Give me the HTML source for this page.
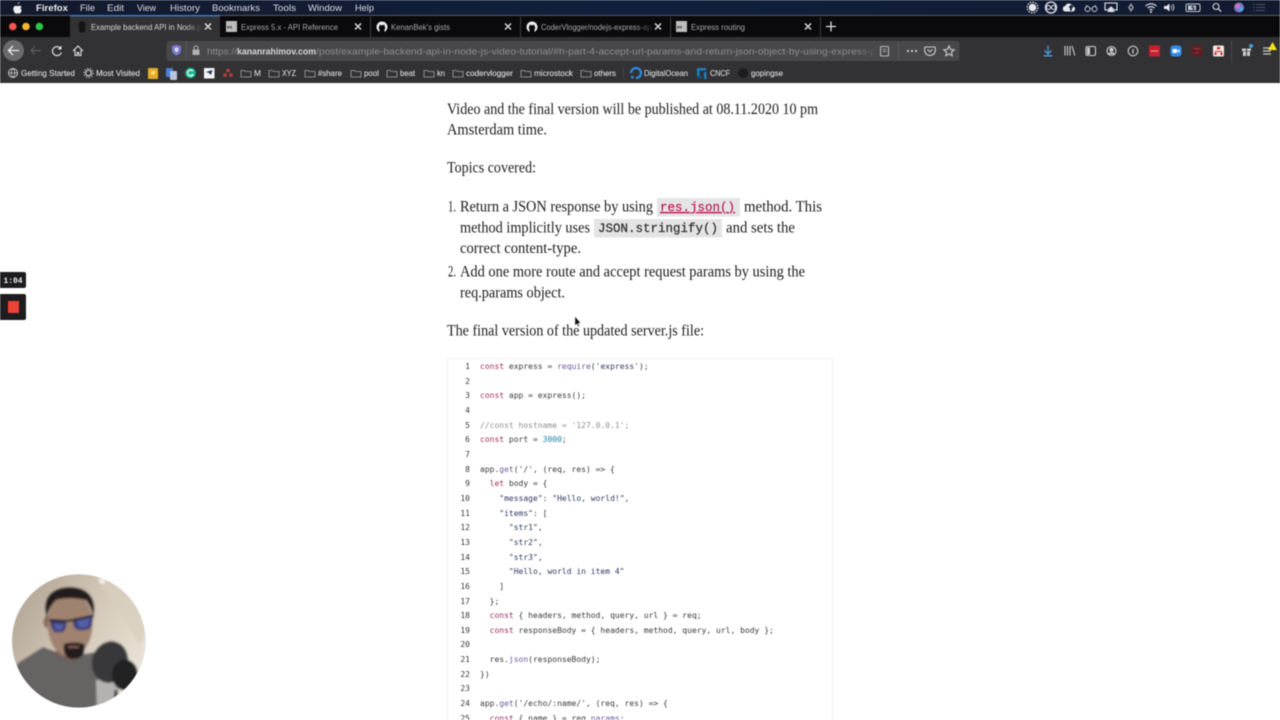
<!DOCTYPE html>
<html><head><meta charset="utf-8"><title>Example backend API in Node.js</title>
<style>
html,body{margin:0;padding:0;width:1280px;height:720px;overflow:hidden;background:#fff}
svg{position:absolute;left:0;top:0}
.s{font-family:"Liberation Sans",sans-serif}
.g{font-family:"Liberation Serif",serif;font-size:15.5px;fill:#1c1c1c}
.m{font-family:"Liberation Mono",monospace;font-size:12.5px;stroke-width:.2px}
#all{filter:blur(.4px)}
#code{position:absolute;left:447px;top:358px;width:386px;height:362px;overflow:hidden;box-sizing:border-box;border:1px solid #f1f1f1;border-bottom:0;border-radius:2px;background:#fff}
#code pre{margin:0;position:absolute;top:1px;font:8px/14.65px "DejaVu Sans Mono",monospace;color:#3a3a3a}
#n{left:0;width:22px;text-align:right}
#c{left:32px}
.k{color:#a0305f}.f{color:#6f5a9e}.t{color:#2f3c60}.u{color:#1f7fa8}.o{color:#8f9194}
</style></head><body>
<div id="all">
<svg width="1280" height="720" viewBox="0 0 1280 720" xmlns="http://www.w3.org/2000/svg">
<defs><linearGradient id="bar" x1="0" x2="1" y1="0" y2="0"><stop offset="0" stop-color="#141a2e"/><stop offset=".5" stop-color="#10203c"/><stop offset="1" stop-color="#121a30"/></linearGradient>
<linearGradient id="wall" x1="0" x2="1" y1="0" y2=".6"><stop offset="0" stop-color="#a69a8a"/><stop offset=".55" stop-color="#d2c6b6"/><stop offset="1" stop-color="#ebe5da"/></linearGradient>
<clipPath id="cc"><circle cx="78.700" cy="641" r="66.500"/></clipPath>
<filter id="soft" x="-10%" y="-10%" width="120%" height="120%"><feGaussianBlur stdDeviation="1.100"/></filter>
<linearGradient id="fade"><stop offset="0" stop-color="#323234" stop-opacity="0"/><stop offset="1" stop-color="#323234"/></linearGradient>
<linearGradient id="fade2"><stop offset="0" stop-color="#0a0a0c" stop-opacity="0"/><stop offset="1" stop-color="#0a0a0c"/></linearGradient>
<linearGradient id="fade3"><stop offset="0" stop-color="#48484a" stop-opacity="0"/><stop offset="1" stop-color="#48484a"/></linearGradient></defs>

<!-- menu bar -->
<rect width="1280" height="15" fill="url(#bar)"/>
<path d="M17.800 4c.9-.1 1.600-.9 1.600-1.900-1 .1-1.800 1-1.600 1.900zM21.800 10.300c-1-.5-1.400-1.800-.9-2.800.2-.3.4-.6.7-.8-.5-.7-1.300-1-2.100-1-.8 0-1.300.4-1.800.4s-1.100-.4-1.800-.4c-1.600.1-2.600 1.500-2.600 3.200 0 2 1.500 4.700 2.800 4.700.6 0 .9-.4 1.600-.4s1 .4 1.600.4c1.100 0 2-1.700 2.500-3.300z" fill="#eee"/>
<g class="s" font-size="9.500" fill="#dcdde2">
<text x="36" y="11" font-weight="700" textLength="32" lengthAdjust="spacingAndGlyphs" fill="#eee">Firefox</text>
<text x="80" y="11" textLength="15" lengthAdjust="spacingAndGlyphs">File</text>
<text x="107" y="11" textLength="17" lengthAdjust="spacingAndGlyphs">Edit</text>
<text x="137" y="11" textLength="19" lengthAdjust="spacingAndGlyphs">View</text>
<text x="170" y="11" textLength="30" lengthAdjust="spacingAndGlyphs">History</text>
<text x="212" y="11" textLength="48" lengthAdjust="spacingAndGlyphs">Bookmarks</text>
<text x="273" y="11" textLength="23" lengthAdjust="spacingAndGlyphs">Tools</text>
<text x="308" y="11" textLength="34" lengthAdjust="spacingAndGlyphs">Window</text>
<text x="355" y="11" textLength="19" lengthAdjust="spacingAndGlyphs">Help</text>
</g>
<!-- status icons -->
<g fill="#e8e8ec" stroke="none">
<circle cx="1032.500" cy="7.500" r="3.800"/><circle cx="1032.500" cy="7.500" r="5.400" fill="none" stroke="#e8e8ec" stroke-width="1.200" stroke-dasharray="1.600 1.200"/>
<circle cx="1051" cy="7.500" r="5.500" fill="none" stroke="#e8e8ec" stroke-width="1.300"/><circle cx="1048.500" cy="7.500" r="2" fill="none" stroke="#e8e8ec"/><circle cx="1053.500" cy="7.500" r="2" fill="none" stroke="#e8e8ec"/>
<path d="M1065 11.500a2.800 2.800 0 0 1 .3-5.500 3.800 3.800 0 0 1 7.200.2 2.700 2.700 0 0 1 .5 5.300z"/>
<path d="M1071 4.600l-2.600 3h1.600v3h2v-3h1.600z" fill="#10203c"/>
<circle cx="1087.500" cy="9" r="2.500" fill="none" stroke="#c9cad0" stroke-width=".9"/><circle cx="1094.500" cy="9" r="2.500" fill="none" stroke="#c9cad0" stroke-width=".9"/><path d="M1090 8.500h2M1085.500 8l1.500-3M1096.500 8l-1.500-3" stroke="#c9cad0" stroke-width=".8" fill="none"/>
<path d="M1105 3h12v7h-2.500l-3.500-3-3.500 3H1105z" fill="none" stroke="#e8e8ec" stroke-width="1.100"/><path d="M1111 7.500l4 4.500h-8z"/>
<path d="M1131 3l3 4.500-3 4.500-3-4.500z" fill="#9a9ca4"/><circle cx="1131" cy="7.500" r="1.200" fill="#10203c"/>
<path d="M1145.500 6a8 8 0 0 1 11 0M1147.500 8a5.200 5.200 0 0 1 7 0M1149.500 10a2.400 2.400 0 0 1 3 0" fill="none" stroke="#e8e8ec" stroke-width="1.200"/><circle cx="1151" cy="12" r="1"/>
<path d="M1164 6h2.500l3-2.500v8l-3-2.500H1164z"/><path d="M1171 5.500a3 3 0 0 1 0 4M1172.500 4a5 5 0 0 1 0 7" fill="none" stroke="#e8e8ec" stroke-width=".8"/>
<rect x="1186" y="4" width="14" height="7.500" rx="1.500" fill="none" stroke="#c9cad0"/><path d="M1188 5.500h8v4.500h-8z" fill="#c9cad0"/><path d="M1193.500 4.500l-2.500 3.500h2l-.5 3 2.500-3.500h-2z" fill="#10203c"/>
<circle cx="1216" cy="6.500" r="3" fill="none" stroke="#dcdde2" stroke-width="1.100"/><path d="M1218.200 8.700l3 3" stroke="#dcdde2" stroke-width="1.200"/>
<circle cx="1239" cy="7.500" r="5" fill="#7f73c8"/><circle cx="1237.500" cy="6" r="2.200" fill="#e26fae"/><circle cx="1241" cy="9" r="2.200" fill="#4fa8e0"/>
<path d="M1253 4.500h1.500M1256 4.500h9M1253 7.500h1.500M1256 7.500h9M1253 10.500h1.500M1256 10.500h9" stroke="#50566a" stroke-width=".9"/>
</g>

<!-- tab strip -->
<rect y="15" width="1280" height="22" fill="#0a0a0c"/>
<rect y="15" width="1280" height=".8" fill="#6d6d74"/>
<rect x="70" y="15" width="150" height="22" fill="#323234"/>
<rect x="70" y="15" width="150" height="1.300" fill="#3f7fd6"/>
<circle cx="12.800" cy="26.500" r="3.800" fill="#f1554e"/><circle cx="26" cy="26.500" r="3.800" fill="#f2b632"/><circle cx="39.400" cy="26.500" r="3.800" fill="#2fc44a"/>
<g stroke="#4a4a4e" stroke-width=".8"><path d="M370.500 17v20M520.500 17v20M670.500 17v20M820.500 17v20"/></g>
<g class="s" font-size="8">
<text x="91" y="30" fill="#d8d8da" textLength="112" lengthAdjust="spacingAndGlyphs">Example backend API in Node.js</text>
<rect x="185" y="20" width="18" height="14" fill="url(#fade)"/>
<text x="241" y="30" fill="#a8a8aa" textLength="97" lengthAdjust="spacingAndGlyphs">Express 5.x - API Reference</text>
<text x="391" y="30" fill="#a8a8aa" textLength="59" lengthAdjust="spacingAndGlyphs">KenanBek's gists</text>
<text x="541" y="30" fill="#a8a8aa" textLength="112" lengthAdjust="spacingAndGlyphs">CoderVlogger/nodejs-express-api</text>
<rect x="636" y="20" width="18" height="14" fill="url(#fade2)"/>
<text x="691" y="30" fill="#a8a8aa" textLength="54" lengthAdjust="spacingAndGlyphs">Express routing</text>
</g>
<g stroke="#eee" stroke-width="1.300"><path d="M205 23.500l6 6M211 23.500l-6 6M355 23.500l6 6M361 23.500l-6 6M505 23.500l6 6M511 23.500l-6 6M655 23.500l6 6M661 23.500l-6 6M805 23.500l6 6M811 23.500l-6 6"/></g>
<path d="M831 21.500v10M826 26.500h10" stroke="#ddd" stroke-width="1.300"/>
<!-- favicons -->
<circle cx="82" cy="25" r="3.800" fill="#151515"/><path d="M78.500 28h7l-1 4.500h-5z" fill="#151515"/>
<g class="s" font-size="4.500" font-weight="700">
<rect x="226" y="21" width="11" height="11" fill="#bdbdbd"/><text x="227" y="28.500" fill="#222">ex</text>
<rect x="676" y="21" width="11" height="11" fill="#bdbdbd"/><text x="677" y="28.500" fill="#222">ex</text>
</g>
<g fill="#eee"><circle cx="382" cy="27" r="5.500"/><circle cx="532" cy="27" r="5.500"/></g>
<g fill="#0a0a0c"><path d="M379.500 32.500v-3c-.8-.8-1-2.500 0-3.500l.3-1.500 1.400.8h1.600l1.400-.8.3 1.500c1 1 .8 2.700 0 3.500v3z"/><path d="M529.500 32.500v-3c-.8-.8-1-2.500 0-3.500l.3-1.500 1.400.8h1.600l1.400-.8.3 1.500c1 1 .8 2.700 0 3.500v3z"/></g>

<!-- nav toolbar -->
<rect y="37" width="1280" height="46" fill="#323234"/>
<circle cx="13.500" cy="50.500" r="10.500" fill="#6a6a6c"/>
<path d="M19 50.500H8.500M13 46l-4.500 4.500L13 55" fill="none" stroke="#eee" stroke-width="1.300"/>
<path d="M41 50.500h-10M35 46.500l-4 4 4 4" fill="none" stroke="#5e5e60" stroke-width="1.200"/>
<path d="M61 49a4.500 4.500 0 1 0 .3 3.500" fill="none" stroke="#e2e2e2" stroke-width="1.200"/><path d="M61.500 45.500v4h-4z" fill="#e2e2e2"/>
<path d="M73 51l5-5 5 5M75 50v5.500h2.200v-3h1.600v3H81V50" fill="none" stroke="#e2e2e2" stroke-width="1.100"/>
<!-- url bar -->
<rect x="166.500" y="41" width="793" height="20" rx="3" fill="#48484a"/>
<path d="M172.500 46.500l4-1.300 4 1.300v3.500c0 2.500-1.700 4-4 5-2.300-1-4-2.500-4-5z" fill="#6f6fd0" stroke="#8f8fe6" stroke-width=".7"/><path d="M174.500 47.800l2-.6 2 .6v2c0 1.300-.8 2.200-2 2.800-1.200-.6-2-1.500-2-2.800z" fill="#d5d5ea"/>
<path d="M186.500 41.500v19" stroke="#5a5a5c" stroke-width=".8"/>
<rect x="192.500" y="49.500" width="7" height="5.500" rx=".8" fill="#b0b0b2"/><path d="M194 49.500v-1.500a2 2 0 0 1 4 0v1.500" fill="none" stroke="#b0b0b2"/>
<text class="s" x="207" y="54.500" font-size="9" fill="#8e8e90" textLength="30" lengthAdjust="spacingAndGlyphs">https://</text>
<text class="s" x="237" y="54.500" font-size="9" font-weight="700" fill="#d6d6d8" textLength="79" lengthAdjust="spacingAndGlyphs">kananrahimov.com</text>
<text class="s" x="316" y="54.500" font-size="9" fill="#8e8e90" textLength="562" lengthAdjust="spacingAndGlyphs">/post/example-backend-api-in-node-js-video-tutorial/#h-part-4-accept-url-params-and-return-json-object-by-using-express-js</text>
<rect x="858" y="42" width="20" height="18" fill="url(#fade3)"/>
<rect x="878" y="42" width="20" height="18" fill="#48484a"/>
<rect x="880.500" y="46.500" width="8" height="9.500" rx="1" fill="none" stroke="#bbb" stroke-width="1.100"/><path d="M882.500 49.500h4M882.500 51.500h4" stroke="#bbb" stroke-width=".8"/>
<path d="M898.500 43v16" stroke="#5e5e60" stroke-width=".8"/>
<g fill="#d0d0d2"><circle cx="908" cy="51" r="1.100"/><circle cx="912" cy="51" r="1.100"/><circle cx="916" cy="51" r="1.100"/></g>
<path d="M925.500 47h9a.8.800 0 0 1 .8.800v2.700a5.300 5 0 0 1-10.600 0v-2.700a.8.800 0 0 1 .8-.8z" fill="none" stroke="#ccc" stroke-width="1.100"/><path d="M927.500 49.500l2.500 2.300 2.500-2.300" fill="none" stroke="#ccc" stroke-width="1.100"/>
<path d="M949 46l1.500 3.400 3.700.4-2.800 2.400.8 3.600-3.200-1.900-3.200 1.900.8-3.600-2.800-2.400 3.700-.4z" fill="none" stroke="#ccc" stroke-width="1.100"/>
<!-- toolbar right -->
<path d="M1048 45.500v8M1044.500 50.500l3.500 3.500 3.500-3.500M1043.500 55.800h9" fill="none" stroke="#4a9be0" stroke-width="1.300"/>
<g stroke="#ccc" fill="none" stroke-width="1.100">
<path d="M1065 46v9.500M1067.500 46v9.500M1070 46v9.500M1072 46l2.800 9.500"/>
<rect x="1086" y="46.500" width="9.500" height="9" rx="1.500"/><rect x="1087" y="47.500" width="3" height="7" fill="#ccc" stroke="none"/>
<circle cx="1111.500" cy="51" r="4.500"/><circle cx="1111.500" cy="49.800" r="1.600" fill="#ccc"/><path d="M1108.500 54.200a3.300 2.500 0 0 1 6 0" fill="#ccc"/>
<circle cx="1133" cy="51" r="4.800"/><path d="M1133 49v4.500" stroke-width="1.300"/>
</g>
<rect x="1149" y="45.500" width="11" height="11" rx="1" fill="#c8202e"/><path d="M1151 51h7" stroke="#f2dfe0" stroke-dasharray="1.300 .8" stroke-width="1.300"/>
<rect x="1170.500" y="45.500" width="11" height="11" rx="3" fill="#2d8cf0"/><rect x="1172.500" y="49" width="4.500" height="4" rx=".8" fill="#fff"/><path d="M1177.500 50.500l2-1.300v3.600l-2-1.300z" fill="#fff"/>
<rect x="1191.500" y="45.500" width="11" height="11" rx="1" fill="#5e1f22"/><rect x="1193.500" y="48" width="7" height="1.500" fill="#8c3236"/><rect x="1195.500" y="52" width="3" height="1.500" fill="#8c3236"/>
<rect x="1213" y="45.500" width="11" height="11" rx="1.500" fill="#f1e6e2"/><path d="M1218.500 47.500v2M1215.500 54v-2.500h6V54" fill="none" stroke="#c83c3c"/><rect x="1217" y="47" width="3" height="2.500" fill="#c83c3c"/><rect x="1214.200" y="53" width="2.500" height="2" fill="#c83c3c"/><rect x="1220.200" y="53" width="2.500" height="2" fill="#c83c3c"/>
<path d="M1231.500 40v22" stroke="#4e4e50" stroke-width=".8"/>
<rect x="1242" y="48.500" width="9" height="2.500" fill="#ccc"/><rect x="1243" y="51.500" width="7" height="4.500" fill="#ccc"/><path d="M1246.500 48.500v7.500" stroke="#323234"/><circle cx="1251" cy="46" r="2" fill="#45a1e0"/>
<path d="M1263 48h8M1263 51h8M1263 54h8" stroke="#ccc" stroke-width="1.200"/>
<path d="M1272.500 42l4.500 8h-9z" fill="#f5e21c"/>

<!-- bookmarks -->
<g font-size="7.800" class="s" fill="#d8d8da" stroke="#d8d8da" stroke-width=".12">
<text x="21" y="76" textLength="54" lengthAdjust="spacingAndGlyphs">Getting Started</text>
<text x="96" y="76" textLength="44" lengthAdjust="spacingAndGlyphs">Most Visited</text>
<text x="254" y="76" textLength="7" lengthAdjust="spacingAndGlyphs">M</text>
<text x="282" y="76" textLength="14" lengthAdjust="spacingAndGlyphs">XYZ</text>
<text x="318" y="76" textLength="24" lengthAdjust="spacingAndGlyphs">#share</text>
<text x="364" y="76" textLength="15" lengthAdjust="spacingAndGlyphs">pool</text>
<text x="400" y="76" textLength="15" lengthAdjust="spacingAndGlyphs">beat</text>
<text x="437" y="76" textLength="8" lengthAdjust="spacingAndGlyphs">kn</text>
<text x="466" y="76" textLength="47" lengthAdjust="spacingAndGlyphs">codervlogger</text>
<text x="534" y="76" textLength="39" lengthAdjust="spacingAndGlyphs">microstock</text>
<text x="594" y="76" textLength="22" lengthAdjust="spacingAndGlyphs">others</text>
<text x="644" y="76" textLength="44" lengthAdjust="spacingAndGlyphs">DigitalOcean</text>
<text x="710" y="76" textLength="20" lengthAdjust="spacingAndGlyphs">CNCF</text>
<text x="751" y="76" textLength="32" lengthAdjust="spacingAndGlyphs">gopingse</text>
</g>
<circle cx="13" cy="73" r="4.500" fill="none" stroke="#ccc" stroke-width="1"/><path d="M8.500 73h9M13 68.500c-2.500 3-2.500 6 0 9M13 68.500c2.500 3 2.500 6 0 9" fill="none" stroke="#ccc" stroke-width=".7"/>
<circle cx="88.500" cy="73" r="2.800" fill="none" stroke="#ccc" stroke-width="1.200"/><circle cx="88.500" cy="73" r="4.500" fill="none" stroke="#ccc" stroke-width="1.200" stroke-dasharray="1.300 1.500"/>
<rect x="148" y="68" width="10" height="11" rx="1" fill="#e8ac24"/><path d="M151 71h4v3.500h-4z" fill="#f6dd80"/>
<rect x="166" y="68" width="7" height="9" rx="1" fill="#4a80d8"/><rect x="170" y="71" width="7" height="9" rx="1" fill="#b7c6de"/>
<circle cx="190.500" cy="73" r="5.300" fill="#17b890"/><path d="M193 71.200a3 3 0 1 0 0 3.600h-2" fill="none" stroke="#fff" stroke-width="1.200"/>
<rect x="204" y="68" width="10.500" height="10.500" fill="#f4f4f6"/><path d="M206 72l6.500-2-1.500 5-2-2z" fill="#24355c"/>
<g fill="#b83c3c"><circle cx="228" cy="70.500" r="1.900"/><circle cx="225" cy="75" r="1.900"/><circle cx="231" cy="75" r="1.900"/></g>
<g fill="none" stroke="#a4a4a6" stroke-width=".8">
<path d="M241 70.500v6.500h10v-5.500h-5.500l-1-1z"/>
<path d="M269 70.500v6.500h10v-5.500h-5.500l-1-1z"/><path d="M305 70.500v6.500h10v-5.500h-5.500l-1-1z"/><path d="M351 70.500v6.500h10v-5.500h-5.500l-1-1z"/><path d="M387 70.500v6.500h10v-5.500h-5.500l-1-1z"/><path d="M424 70.500v6.500h10v-5.500h-5.500l-1-1z"/><path d="M453 70.500v6.500h10v-5.500h-5.500l-1-1z"/><path d="M521 70.500v6.500h10v-5.500h-5.500l-1-1z"/><path d="M581 70.500v6.500h10v-5.500h-5.500l-1-1z"/>
</g>
<path d="M623.500 67v12" stroke="#4a4a4c" stroke-width=".8"/>
<path d="M636 78a5 5 0 1 0-5-5" fill="none" stroke="#2f8be0" stroke-width="2.200"/><rect x="631" y="76" width="2.500" height="2.500" fill="#2f8be0"/>
<path d="M697 68h9v2.500h-6.500V76H697z" fill="#1c7fc4"/><path d="M697 76h5v2.500h-5z" fill="#124e7a"/><rect x="704" y="72" width="2.500" height="7" fill="#1c7fc4"/>
<circle cx="743" cy="73" r="5" fill="#1c1c1e"/>

<!-- recording widget -->
<rect x="-3" y="272" width="29" height="16" rx="2" fill="#1d1d1f"/>
<text x="3.500" y="283" font-family="Liberation Mono,monospace" font-size="8" font-weight="700" fill="#f2f2f2" textLength="19" lengthAdjust="spacingAndGlyphs">1:04</text>
<rect x="-3" y="294" width="29" height="26" rx="2" fill="#1d1d1f"/>
<rect x="8" y="301" width="11" height="12" fill="#ef4236"/>

<!-- article text -->
<g class="g" transform="translate(0 .5)">
<text x="447" y="113.500" textLength="371" lengthAdjust="spacingAndGlyphs">Video and the final version will be published at 08.11.2020 10 pm</text>
<text x="447" y="134" textLength="100" lengthAdjust="spacingAndGlyphs">Amsterdam time.</text>
<text x="447" y="172" textLength="89" lengthAdjust="spacingAndGlyphs">Topics covered:</text>
<text x="448" y="211" textLength="8" lengthAdjust="spacingAndGlyphs">1.</text>
<text x="460" y="211" textLength="193" lengthAdjust="spacingAndGlyphs">Return a JSON response by using</text>
<text x="744" y="211" textLength="78" lengthAdjust="spacingAndGlyphs">method. This</text>
<text x="460" y="232" textLength="130" lengthAdjust="spacingAndGlyphs">method implicitly uses</text>
<text x="726" y="232" textLength="69" lengthAdjust="spacingAndGlyphs">and sets the</text>
<text x="460" y="252.500" textLength="121" lengthAdjust="spacingAndGlyphs">correct content-type.</text>
<text x="448" y="276" textLength="8" lengthAdjust="spacingAndGlyphs">2.</text>
<text x="460" y="276" textLength="345" lengthAdjust="spacingAndGlyphs">Add one more route and accept request params by using the</text>
<text x="460" y="297" textLength="105" lengthAdjust="spacingAndGlyphs">req.params object.</text>
<text x="447" y="335" textLength="257" lengthAdjust="spacingAndGlyphs">The final version of the updated server.js file:</text>
</g>
<rect x="657" y="198" width="83" height="18.500" fill="#e4e4e4"/>
<text class="m" x="660" y="211" fill="#c2185b" stroke="#c2185b" text-decoration="underline" textLength="75">res.json()</text>
<rect x="594" y="219" width="128" height="18.500" fill="#e4e4e4"/>
<text class="m" x="598" y="232" fill="#2a2a2a" stroke="#2a2a2a" textLength="120">JSON.stringify()</text>

<!-- webcam -->
<circle cx="78.700" cy="641" r="67" fill="#e4e4e4"/>
<g clip-path="url(#cc)">
<g filter="url(#soft)">
<rect x="5" y="565" width="150" height="150" fill="url(#wall)"/>
<path d="M92 570l48 75 10-20-30-55z" fill="#d9cebd" opacity=".7"/>
<circle cx="102" cy="581" r="3" fill="#f6f2e8"/>
<!-- shirt -->
<path d="M5 690l13-27 25-16 27 10 25-5 12 20 3 50H5z" fill="#666463"/>
<path d="M97 715l-1-35 14-2 8 4 3 33z" fill="#b4b2b0"/>
<!-- neck -->
<path d="M56 640h28v14l-13 8-15-8z" fill="#7a5f50"/>
<!-- head -->
<ellipse cx="47" cy="622" rx="3.500" ry="6" fill="#856a5a"/>
<ellipse cx="70" cy="624" rx="22.500" ry="33" fill="#a08270"/>
<path d="M47 618c-6-18 3-31 23-31 19 0 28 13 23 31-1-9-4-14-7-18-10-2-20-3-30 0-5 5-8 10-9 18z" fill="#221d1d"/>
<!-- beard -->
<path d="M64 644c5-2 14-2 20 0 2 8-1 15-11 15-8 0-10-7-9-15z" fill="#241c1c"/>
<path d="M68 647h11" stroke="#8a5e52" stroke-width="2"/>
<!-- glasses -->
<path d="M50 620l16 1c1 4 0 8-3 11l-8 .5c-3-3-5-8-5-12.500zM73 620l20-4c0 6-1 11-4 13-6 2-11 2-14-1-2-2-2-5-2-8z" fill="#3d4078"/>
<path d="M54 624l10 .5-2 5-6 .5zM77 621l13-3-2 8c-4 2-8 2-10 0z" fill="#5560a8"/>
<path d="M49 620l17 1 7-1 21-4.500" fill="none" stroke="#1a181e" stroke-width="2"/>
<!-- mic -->
<ellipse cx="110" cy="662" rx="18" ry="21" transform="rotate(15 110 662)" fill="#38383a"/>
<ellipse cx="125" cy="675" rx="13" ry="15.500" fill="#242424"/>
<path d="M116 690l-1 22" stroke="#2a2a2a" stroke-width="3"/>
</g>
</g>

<!-- cursor -->
<path d="M575 316.500v9l2-1.800 1.400 3 1-.5-1.300-3 2.500-.2z" fill="#111" stroke="#fff" stroke-width=".3"/>
</svg>

<div id="code">
<pre id="n">1
2
3
4
5
6
7
8
9
10
11
12
13
14
15
16
17
18
19
20
21
22
23
24
25</pre>
<pre id="c"><span class="k">const</span> express = <span class="f">require</span>('<span class="t">express</span>');

<span class="k">const</span> app = express();

<span class="o">//const hostname = '127.0.0.1';</span>
<span class="k">const</span> port = <span class="u">3000</span>;

app.<span class="f">get</span>('/', (req, res) =&gt; {
  <span class="k">let</span> body = {
    <span class="t">"message"</span>: <span class="t">"Hello, world!"</span>,
    <span class="t">"items"</span>: [
      <span class="t">"str1"</span>,
      <span class="t">"str2"</span>,
      <span class="t">"str3"</span>,
      <span class="t">"Hello, world in item 4"</span>
    ]
  };
  <span class="k">const</span> { headers, method, query, url } = req;
  <span class="k">const</span> responseBody = { headers, method, query, url, body };

  res.<span class="f">json</span>(responseBody);
})

app.<span class="f">get</span>('/echo/:name/', (req, res) =&gt; {
  <span class="k">const</span> { name } = req.<span class="f">params</span>;</pre>
</div>
</div>
</body></html>
